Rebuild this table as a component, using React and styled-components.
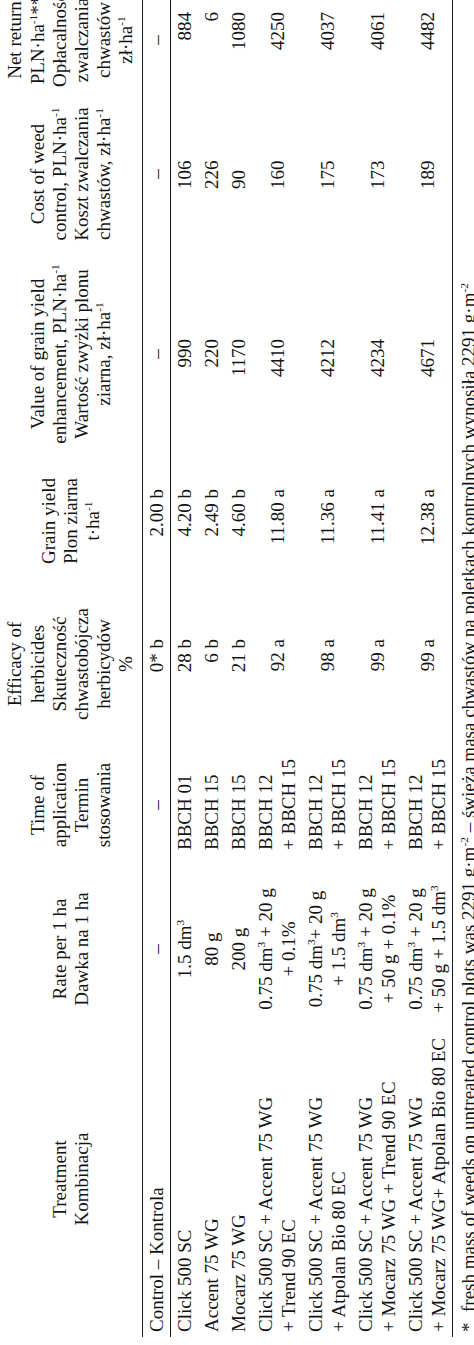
import React from 'react';
import styled, { createGlobalStyle } from 'styled-components';

const GlobalStyle = createGlobalStyle`
  html, body {
    margin: 0;
    padding: 0;
    background: #fff;
    overflow: hidden;
  }
`;

// szerokości kolumn tabeli (w układzie poziomym, przed obrotem)
const COLS = '316px 144px 144px 138px 148px 186px 174px 94px';
const RULE = '1.5px solid #1c1c1c';

const Page = styled.div`
  width: 474px;
  height: 1345px;
  overflow: hidden;
  position: relative;
  background: #fff;
`;

// cała tabela jest drukowana w poprzek strony - obracamy ją o 90 stopni
const Sheet = styled.div`
  width: 1345px;
  height: 474px;
  transform-origin: top left;
  transform: translateY(1345px) rotate(-90deg);
  font-family: "Liberation Serif", "Times New Roman", serif;
  font-size: 19px;
  color: #141414;
`;

const Table = styled.div`
  margin-top: -8px;
`;

const Row = styled.div`
  display: grid;
  grid-template-columns: ${COLS};
  border-bottom: ${p => (p.$rule ? RULE : 'none')};
`;

const HeadRow = styled(Row)`
  height: 142px;
`;

const HeadCell = styled.div`
  display: flex;
  flex-direction: column;
  justify-content: center;
  align-items: center;
  text-align: center;
  line-height: 22.2px;
  white-space: nowrap;
`;

const Cell = styled.div`
  display: flex;
  flex-direction: column;
  justify-content: center;
  align-items: ${p =>
    p.$align === 'left' ? 'flex-start' : p.$align === 'right' ? 'flex-end' : 'center'};
  padding: ${p => (p.$dash ? '0' : p.$pad || '0')};
  min-height: ${p => p.$h || 27}px;
  line-height: 23px;
  white-space: nowrap;
  box-sizing: border-box;
`;

const Sup = styled.sup`
  font-size: 0.6em;
  line-height: 0;
  vertical-align: 0.65em;
`;

const Note = styled.div`
  display: flex;
  margin-top: 3.5px;
  line-height: 23px;
  white-space: nowrap;
`;

const Star = styled.span`
  width: 20px;
  padding-left: 5px;
`;

const Ha = () => <>·ha<Sup>-1</Sup></>;
const Dm = () => <>dm<Sup>3</Sup></>;

const cols = [
  { align: 'left', pad: '0 0 0 5px' },
  { align: 'center' },
  { align: 'left', pad: '0 0 0 27px' },
  { align: 'right', pad: '0 44px 0 0' },
  { align: 'right', pad: '0 42px 0 0' },
  { align: 'right', pad: '0 78px 0 0' },
  { align: 'left', pad: '0 0 0 72px' },
  { align: 'right', pad: '0 19px 0 0' },
];

const headers = [
  ['Treatment', 'Kombinacja'],
  ['Rate per 1 ha', 'Dawka na 1 ha'],
  ['Time of', 'application', 'Termin', 'stosowania'],
  ['Efficacy of', 'herbicides', 'Skuteczność', 'chwastobójcza', 'herbicydów', '%'],
  ['Grain yield', 'Plon ziarna', <>t<Ha /></>],
  ['Value of grain yield', <>enhancement, PLN<Ha /></>, 'Wartość zwyżki plonu', <>ziarna, zł<Ha /></>],
  ['Cost of weed', <>control, PLN<Ha /></>, 'Koszt zwalczania', <>chwastów, zł<Ha /></>],
  ['Net return', <>PLN<Ha />**</>, 'Opłacalność', 'zwalczania', 'chwastów', <>zł<Ha /></>],
];

const DASH = '–';

const control = [['Control – Kontrola'], [DASH], [DASH], ['0* b'], ['2.00 b'], [DASH], [DASH], [DASH]];

const rows = [
  [['Click 500 SC'], [<>1.5 <Dm /></>], ['BBCH 01'], ['28 b'], ['4.20 b'], ['990'], ['106'], ['884']],
  [['Accent 75 WG'], ['80 g'], ['BBCH 15'], ['6 b'], ['2.49 b'], ['220'], ['226'], ['6']],
  [['Mocarz 75 WG'], ['200 g'], ['BBCH 15'], ['21 b'], ['4.60 b'], ['1170'], ['90'], ['1080']],
  [
    ['Click 500 SC + Accent 75 WG', '+ Trend 90 EC'],
    [<>0.75 <Dm /> + 20 g</>, '+ 0.1%'],
    ['BBCH 12', '+ BBCH 15'],
    ['92 a'], ['11.80 a'], ['4410'], ['160'], ['4250'],
  ],
  [
    ['Click 500 SC + Accent 75 WG', '+ Atpolan Bio 80 EC'],
    [<>0.75 <Dm />+ 20 g</>, <>+ 1.5 <Dm /></>],
    ['BBCH 12', '+ BBCH 15'],
    ['98 a'], ['11.36 a'], ['4212'], ['175'], ['4037'],
  ],
  [
    ['Click 500 SC + Accent 75 WG', '+ Mocarz 75 WG + Trend 90 EC'],
    [<>0.75 <Dm /> + 20 g</>, '+ 50 g + 0.1%'],
    ['BBCH 12', '+ BBCH 15'],
    ['99 a'], ['11.41 a'], ['4234'], ['173'], ['4061'],
  ],
  [
    ['Click 500 SC + Accent 75 WG', '+ Mocarz 75 WG+ Atpolan Bio 80 EC'],
    [<>0.75 <Dm /> + 20 g</>, <>+ 50 g + 1.5 <Dm /></>],
    ['BBCH 12', '+ BBCH 15'],
    ['99 a'], ['12.38 a'], ['4671'], ['189'], ['4482'],
  ],
];

const DataRow = ({ cells, rule, h }) => (
  <Row $rule={rule}>
    {cells.map((lines, i) => {
      const dash = lines.length === 1 && lines[0] === DASH;
      return (
        <Cell
          key={i}
          $align={dash ? 'center' : cols[i].align}
          $pad={cols[i].pad}
          $dash={dash}
          $h={h}
        >
          {lines.map((l, j) => (
            <span key={j}>{l}</span>
          ))}
        </Cell>
      );
    })}
  </Row>
);

const App = () => (
  <Page>
    <GlobalStyle />
    <Sheet>
      <Table>
        <HeadRow $rule>
          {headers.map((lines, i) => (
            <HeadCell key={i}>
              {lines.map((l, j) => (
                <span key={j}>{l}</span>
              ))}
            </HeadCell>
          ))}
        </HeadRow>
        <DataRow cells={control} rule h={27} />
        {rows.map((r, i) => (
          <DataRow key={i} cells={r} rule={i === rows.length - 1} h={r[0].length > 1 ? 50 : 27} />
        ))}
        <Note>
          <Star>*</Star>
          <span>
            fresh mass of weeds on untreated control plots was 2291 g·m<Sup>-2</Sup> – świeża masa
            chwastów na poletkach kontrolnych wynosiła 2291 g·m<Sup>-2</Sup>
          </span>
        </Note>
      </Table>
    </Sheet>
  </Page>
);

export default App;
